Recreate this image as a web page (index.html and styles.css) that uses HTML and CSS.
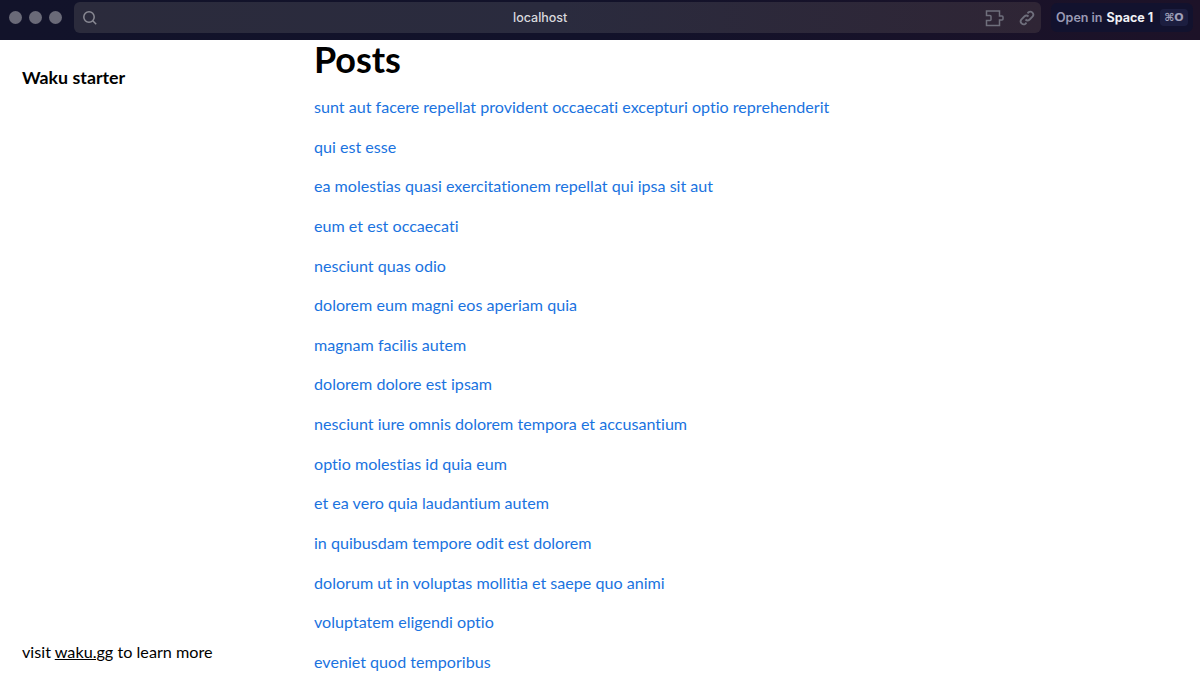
FILE: index.html
```html
<!DOCTYPE html>
<html lang="en">
<head>
  <meta charset="UTF-8">
  <title>Waku starter</title>
  <link rel="stylesheet" href="styles.css">
</head>
<body>
  <div class="toolbar">
    <div class="traffic"><span></span><span></span><span></span></div>
    <div class="address">
      <svg class="search" width="16" height="16" viewBox="0 0 16 16" fill="none" stroke="#8a8a94" stroke-width="1.5"><circle cx="7" cy="7" r="5.2"/><path d="M10.8 10.8l3.4 3.4"/></svg>
      <span class="url">localhost</span>
      <svg class="tool" width="20" height="18" viewBox="0 0 20 18" fill="none" stroke="#6f6f7c" stroke-width="1.5"><path d="M1.5 2h13v5h2.5a1 1 0 0 1 1 1v2a1 1 0 0 1-1 1h-2.5v5.5h-13v-5h3.5a1 1 0 0 0 1-1v-3a1 1 0 0 0-1-1h-3.5z"/></svg>
      <svg class="tool" width="18" height="18" viewBox="0 0 18 18" fill="none" stroke="#6f6f7c" stroke-width="1.8"><path d="M7.5 10.5a3 3 0 0 0 4.2 0l3-3a3 3 0 0 0-4.2-4.2l-1 1M10.5 7.5a3 3 0 0 0-4.2 0l-3 3a3 3 0 0 0 4.2 4.2l1-1"/></svg>
    </div>
    <div class="open-in">
      <span class="open-label">Open in</span> <b>Space 1</b>
      <span class="shortcut">⌘O</span>
    </div>
  </div>
  <div class="page">
    <aside class="sidebar">
      <div class="brand">Waku starter</div>
      <div class="visit">visit <a href="#">waku.gg</a> to learn more</div>
    </aside>
    <main class="content">
      <h1>Posts</h1>
      <ul class="posts">
        <li><a href="#">sunt aut facere repellat provident occaecati excepturi optio reprehenderit</a></li>
        <li><a href="#">qui est esse</a></li>
        <li><a href="#">ea molestias quasi exercitationem repellat qui ipsa sit aut</a></li>
        <li><a href="#">eum et est occaecati</a></li>
        <li><a href="#">nesciunt quas odio</a></li>
        <li><a href="#">dolorem eum magni eos aperiam quia</a></li>
        <li><a href="#">magnam facilis autem</a></li>
        <li><a href="#">dolorem dolore est ipsam</a></li>
        <li><a href="#">nesciunt iure omnis dolorem tempora et accusantium</a></li>
        <li><a href="#">optio molestias id quia eum</a></li>
        <li><a href="#">et ea vero quia laudantium autem</a></li>
        <li><a href="#">in quibusdam tempore odit est dolorem</a></li>
        <li><a href="#">dolorum ut in voluptas mollitia et saepe quo animi</a></li>
        <li><a href="#">voluptatem eligendi optio</a></li>
        <li><a href="#">eveniet quod temporibus</a></li>
      </ul>
    </main>
  </div>
</body>
</html>
```

FILE: styles.css
```css
html, body {
  height: 100%;
}
body {
  margin: 0;
  overflow: hidden;
  background-color: #fff;
  color: #000;
  font-family: "Lato", "Noto Sans", sans-serif;
  font-variant-ligatures: none;
  display: flex;
  flex-direction: column;
}
/* Browser bar */
.toolbar {
  height: 40px;
  box-sizing: border-box;
  flex: none;
  display: flex;
  align-items: center;
  padding: 0 7px 5px 9px;
  background: linear-gradient(90deg, #12132a, #12122a 50%, #1d1228);
}
.traffic {
  display: flex;
  gap: 7px;
  width: 65px;
  flex: none;
}
.traffic span {
  width: 13px;
  height: 13px;
  border-radius: 50%;
  background-color: #6a6a78;
}
.address {
  width: 967px;
  flex: none;
  height: 31px;
  position: relative;
  display: flex;
  align-items: center;
  gap: 13px;
  padding: 0 5px 0 8px;
  box-sizing: border-box;
  border-radius: 6px;
  background: linear-gradient(90deg, #2b2b3c, #2a2b3e 50%, #2f2535);
}
.search {
  margin-right: auto;
}
.url {
  position: absolute;
  left: 439px;
  font: 500 12.5px "Inter", sans-serif;
  color: #d8d8dc;
}
.open-in {
  height: 29px;
  margin-left: 10px;
  display: flex;
  align-items: center;
  gap: 4px;
  padding: 0 5px;
  border-radius: 6px;
  background-color: #12122e;
  font: 600 12.5px "Inter", sans-serif;
  color: #f0f0f4;
  white-space: nowrap;
}
.open-in b {
  font-weight: 700;
}
.open-label {
  color: #9a9ab4;
}
.shortcut {
  margin-left: 3px;
  padding: 2px 4px;
  border-radius: 4px;
  background-color: #1c1e40;
  color: #a0a0b8;
  font-family: "DejaVu Sans", sans-serif;
  font-size: 11px;
  font-weight: 700;
}
/* Page */
.page {
  flex: 1;
  min-height: 0;
  display: flex;
}
.sidebar {
  width: 314px;
  flex: none;
  box-sizing: border-box;
  padding: 25px 22px 24px;
  display: flex;
  flex-direction: column;
  justify-content: space-between;
}
.brand {
  font-size: 17.8px;
  font-weight: 700;
  line-height: 24px;
}
.visit {
  font-size: 16.2px;
  line-height: 24px;
}
.visit a {
  color: #000;
}
.content {
  flex: 1;
}
h1 {
  margin: 0;
  font-size: 36px;
  font-weight: 700;
  line-height: 38px;
  letter-spacing: -0.1px;
}
.posts {
  list-style: none;
  margin: 0;
  padding: 17px 0 0;
}
.posts li {
  height: 39.65px;
  line-height: 24px;
  font-size: 16.1px;
}
.posts a {
  color: #1a73e0;
  text-decoration: none;
}
```
